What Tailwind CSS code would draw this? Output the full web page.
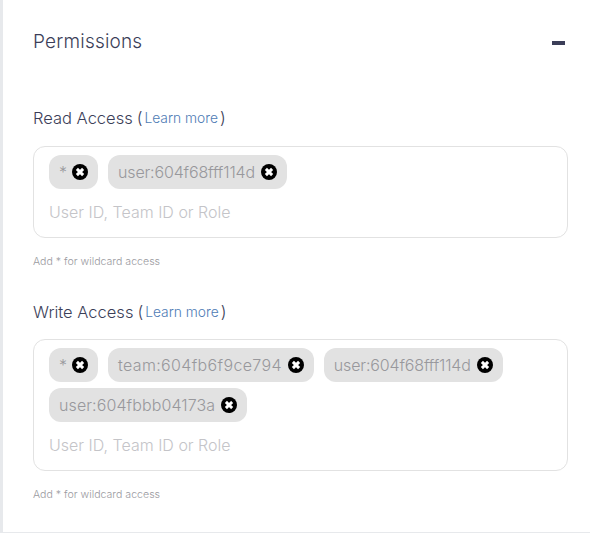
<!DOCTYPE html>
<html lang="en">
<head>
  <meta charset="UTF-8">
  <title>Permissions</title>
  <script src="https://cdn.jsdelivr.net/npm/@tailwindcss/browser@4"></script>
</head>
<body class="bg-white font-['Inter',sans-serif] overflow-hidden">
  <div class="w-[590px] h-[533px] border-l-[3px] border-b border-[#e7e9ec] pl-[30px] pr-[25px] bg-white">
    <!-- header -->
    <div class="flex items-center justify-between h-[85px]">
      <h2 class="text-[19px] font-light text-[#3b3e58] tracking-[0.2px]">Permissions</h2>
      <div class="w-[13px] h-[4px] bg-[#3b3e58]"></div>
    </div>

    <!-- read access -->
    <div class="mt-[21px] h-[24px] flex items-center text-[16.5px] font-light text-[#3b3e58]">
      Read Access
      <span class="ml-1">(</span>
      <a href="#" class="text-[13.8px] text-[#4f7cb5] mx-[2px]">Learn more</a>
      <span>)</span>
    </div>
    <div class="mt-[16px] w-[535px] border border-[#e2e2e2] rounded-[12px] pt-[8px] px-[15px] h-[92px]">
      <div class="flex flex-wrap gap-x-[10px] gap-y-[6px]">
        <span class="h-[34px] px-[10px] rounded-[12px] bg-[#e2e2e2] flex items-center gap-[5px] text-[16px] font-light text-[#98989c]">*
          <svg class="w-[16px] h-[16px]" viewBox="0 0 16 16"><circle cx="8" cy="8" r="8" fill="#000"/><path d="M4.9 4.9l6.2 6.2M11.1 4.9l-6.2 6.2" stroke="#fff" stroke-width="3"/></svg>
        </span>
        <span class="h-[34px] px-[10px] rounded-[12px] bg-[#e2e2e2] flex items-center gap-[6px] text-[16px] font-light text-[#98989c] tracking-[-0.15px]">user:604f68fff114d
          <svg class="w-[16px] h-[16px]" viewBox="0 0 16 16"><circle cx="8" cy="8" r="8" fill="#000"/><path d="M4.9 4.9l6.2 6.2M11.1 4.9l-6.2 6.2" stroke="#fff" stroke-width="3"/></svg>
        </span>
      </div>
      <input type="text" placeholder="User ID, Team ID or Role" class="mt-[6px] block w-full h-[34px] text-[16px] font-light outline-none placeholder:text-[#c4c4c8]">
    </div>
    <p class="mt-[17px] h-[14px] leading-[14px] text-[10.6px] font-light text-[#9a9aa0]">Add * for wildcard access</p>

    <!-- write access -->
    <div class="mt-[31px] h-[24px] flex items-center text-[16.5px] font-light text-[#3b3e58]">
      Write Access
      <span class="ml-1">(</span>
      <a href="#" class="text-[13.8px] text-[#4f7cb5] mx-[2px]">Learn more</a>
      <span>)</span>
    </div>
    <div class="mt-[15px] w-[535px] border border-[#e2e2e2] rounded-[12px] pt-[8px] px-[15px] h-[132px]">
      <div class="flex flex-wrap gap-x-[10px] gap-y-[6px]">
        <span class="h-[34px] px-[10px] rounded-[12px] bg-[#e2e2e2] flex items-center gap-[5px] text-[16px] font-light text-[#98989c]">*
          <svg class="w-[16px] h-[16px]" viewBox="0 0 16 16"><circle cx="8" cy="8" r="8" fill="#000"/><path d="M4.9 4.9l6.2 6.2M11.1 4.9l-6.2 6.2" stroke="#fff" stroke-width="3"/></svg>
        </span>
        <span class="h-[34px] px-[10px] rounded-[12px] bg-[#e2e2e2] flex items-center gap-[6px] text-[16px] font-light text-[#98989c] tracking-[0.35px]">team:604fb6f9ce794
          <svg class="w-[16px] h-[16px]" viewBox="0 0 16 16"><circle cx="8" cy="8" r="8" fill="#000"/><path d="M4.9 4.9l6.2 6.2M11.1 4.9l-6.2 6.2" stroke="#fff" stroke-width="3"/></svg>
        </span>
        <span class="h-[34px] px-[10px] rounded-[12px] bg-[#e2e2e2] flex items-center gap-[6px] text-[16px] font-light text-[#98989c] tracking-[-0.15px]">user:604f68fff114d
          <svg class="w-[16px] h-[16px]" viewBox="0 0 16 16"><circle cx="8" cy="8" r="8" fill="#000"/><path d="M4.9 4.9l6.2 6.2M11.1 4.9l-6.2 6.2" stroke="#fff" stroke-width="3"/></svg>
        </span>
        <span class="h-[34px] px-[10px] rounded-[12px] bg-[#e2e2e2] flex items-center gap-[6px] text-[16px] font-light text-[#98989c] tracking-[0.1px]">user:604fbbb04173a
          <svg class="w-[16px] h-[16px]" viewBox="0 0 16 16"><circle cx="8" cy="8" r="8" fill="#000"/><path d="M4.9 4.9l6.2 6.2M11.1 4.9l-6.2 6.2" stroke="#fff" stroke-width="3"/></svg>
        </span>
      </div>
      <input type="text" placeholder="User ID, Team ID or Role" class="mt-[6px] block w-full h-[34px] text-[16px] font-light outline-none placeholder:text-[#c4c4c8]">
    </div>
    <p class="mt-[17px] h-[14px] leading-[14px] text-[10.6px] font-light text-[#9a9aa0]">Add * for wildcard access</p>
  </div>
</body>
</html>
